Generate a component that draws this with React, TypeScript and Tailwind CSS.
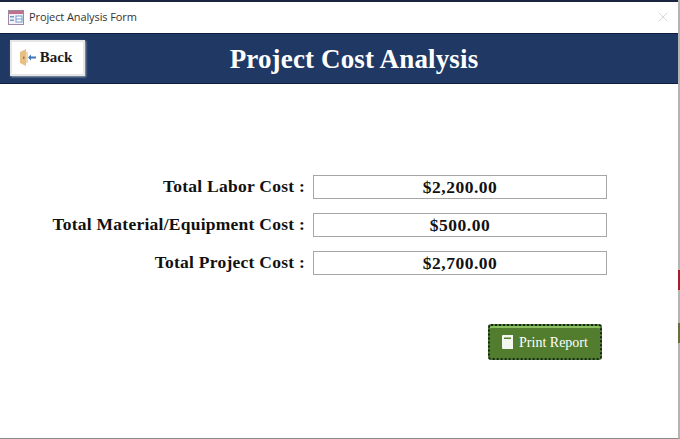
import React from 'react';
import { X } from 'lucide-react';

const rows = [
  { label: 'Total Labor Cost :', value: '$2,200.00' },
  { label: 'Total Material/Equipment Cost :', value: '$500.00' },
  { label: 'Total Project Cost :', value: '$2,700.00' }
];

function FormIcon() {
  return (
    <svg width="16" height="15" viewBox="0 0 16 15" className="shrink-0">
      <rect x="0.5" y="0.5" width="15" height="14" fill="#f4f0f6" stroke="#9c8aa2" />
      <rect x="1" y="1" width="14" height="3" fill="#c0708c" />
      <rect x="2" y="6" width="4" height="1.5" fill="#6f9bc9" />
      <rect x="2" y="9.5" width="4" height="1.5" fill="#6f9bc9" />
      <rect x="8" y="6" width="6" height="6" fill="#fff" stroke="#6f9bc9" />
      <rect x="8" y="8.5" width="6" height="1" fill="#6f9bc9" />
    </svg>
  );
}

function BackIcon() {
  return (
    <svg width="16" height="17" viewBox="0 0 16 17" className="shrink-0">
      <path d="M0 3 L6 0 V17 L0 14 Z" fill="#e6bf82" />
      <rect x="6" y="3" width="2" height="11" fill="#f0d6ac" />
      <rect x="3" y="7.5" width="1.5" height="2.5" fill="#a8793a" />
      <path d="M8 8.5 L11 5.5 V7.5 H16 V9.5 H11 V11.5 Z" fill="#3f76b5" />
    </svg>
  );
}

function ReportIcon() {
  return (
    <svg width="11" height="14" viewBox="0 0 11 14" className="shrink-0">
      <path d="M1 0 H11 V14 H1 Q0 14 0 13 V1 Q0 0 1 0 Z" fill="#f4f7f0" />
      <rect x="2" y="2.5" width="7" height="1.5" fill="#55802f" />
    </svg>
  );
}

export default function App() {
  return (
    <div className="relative w-[680px] h-[439px] bg-white flex flex-col font-['Liberation_Serif',serif] border-b border-b-[#8a8a8a] border-r-2 border-r-[#b4b4b4]">
      <div className="h-[33px] flex items-center pl-[8px] pr-[7px] border-t-2 border-t-[#1b2440] font-['Open_Sans',sans-serif] text-[11px] text-[#333]">
        <FormIcon />
        <span className="ml-[5px] tracking-[-0.1px]">Project Analysis Form</span>
        <X className="ml-auto mb-[1px] w-[16px] h-[16px] text-[#d8d8d8]" strokeWidth={1.5} />
      </div>
      <div className="h-[51px] bg-[#1f3864] border-y border-[#0f1c3f] flex items-center pl-[10px]">
        <button
          type="button"
          className="mb-[2px] w-[75px] h-[36px] bg-white border-2 border-[#e6e6e6] shadow-[1px_1px_2px_#9aa3b8] flex items-center justify-center gap-[4px] text-[15px] font-bold text-[#1a1a1a] pr-[3px]"
        >
          <BackIcon />
          Back
        </button>
        <h1 className="flex-1 text-center text-[27px] tracking-[0.15px] font-bold text-white pr-[55px] pt-[1px]">
          Project Cost Analysis
        </h1>
      </div>
      <div className="flex-1 pt-[91px] pr-[71px] flex flex-col items-end">
        <div className="flex flex-col gap-[14px]">
          {rows.map((row) => (
            <div key={row.label} className="flex items-center justify-end gap-[8px] leading-none">
              <span className="text-[17.5px] tracking-[0.25px] font-bold text-[#111]">{row.label}</span>
              <div className="w-[294px] h-[24px] border border-[#a6a6a6] flex items-center justify-center pt-[1px] text-[17.5px] tracking-[0.5px] font-bold text-[#111]">
                {row.value}
              </div>
            </div>
          ))}
        </div>
        <button
          type="button"
          className="mt-[49px] mr-[5px] w-[114px] h-[36px] rounded-[3px] bg-[#527d2e] border-2 border-dotted border-[#14281a] shadow-[inset_0_2px_0_#8abf5f] flex items-center justify-center gap-[6px] text-[14px] text-white"
        >
          <ReportIcon />
          Print Report
        </button>
      </div>
      <div className="absolute right-[-2px] top-[270px] w-[2px] h-[20px] bg-[#a02030]" />
      <div className="absolute right-[-2px] top-[323px] w-[2px] h-[20px] bg-[#66703f]" />
    </div>
  );
}
